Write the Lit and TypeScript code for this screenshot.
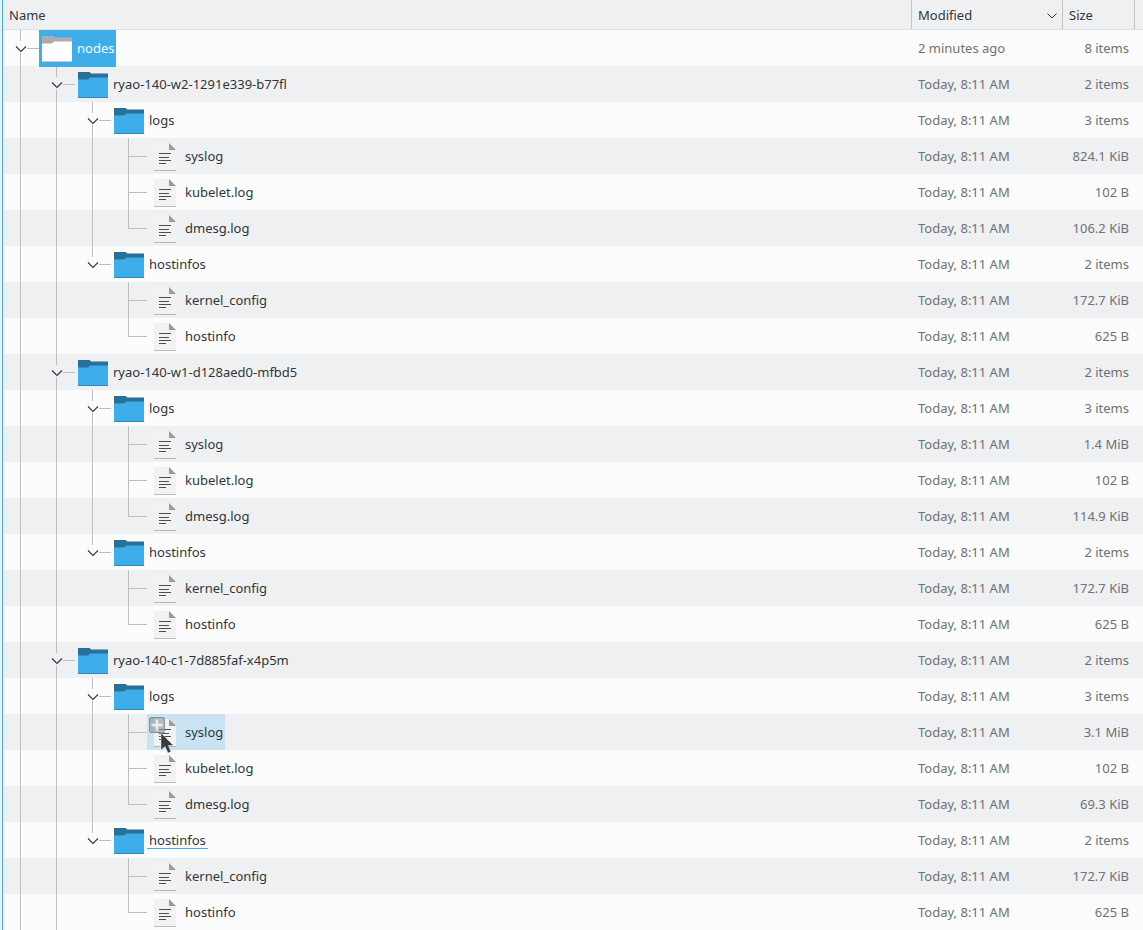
import { LitElement, html, css, svg } from "lit";
import { customElement } from "lit/decorators.js";

type Kind = "dir" | "file";
interface Row {
  depth: number;
  name: string;
  kind: Kind;
  modified: string;
  size: string;
  last?: boolean;
  state?: "selected" | "hover" | "current";
}

const T = "Today, 8:11 AM";
const node = (name: string, sys: string, dm: string): Row[] => [
  { depth: 1, name, kind: "dir", modified: T, size: "2 items" },
  { depth: 2, name: "logs", kind: "dir", modified: T, size: "3 items" },
  { depth: 3, name: "syslog", kind: "file", modified: T, size: sys },
  { depth: 3, name: "kubelet.log", kind: "file", modified: T, size: "102 B" },
  { depth: 3, name: "dmesg.log", kind: "file", modified: T, size: dm, last: true },
  { depth: 2, name: "hostinfos", kind: "dir", modified: T, size: "2 items", last: true },
  { depth: 3, name: "kernel_config", kind: "file", modified: T, size: "172.7 KiB" },
  { depth: 3, name: "hostinfo", kind: "file", modified: T, size: "625 B", last: true },
];

const rows: Row[] = [
  { depth: 0, name: "nodes", kind: "dir", modified: "2 minutes ago", size: "8 items", state: "selected" },
  ...node("ryao-140-w2-1291e339-b77fl", "824.1 KiB", "106.2 KiB"),
  ...node("ryao-140-w1-d128aed0-mfbd5", "1.4 MiB", "114.9 KiB"),
  ...node("ryao-140-c1-7d885faf-x4p5m", "3.1 MiB", "69.3 KiB"),
];
rows[19].state = "hover";
rows[22].state = "current";

const folderIcon = (white: boolean) => svg`
  <svg class="icon" width="32" height="32" viewBox="0 0 32 32">
    <path d="M2 4h11.5l2 1.5H32v7H2z" fill=${white ? "#acacac" : "#2a7199"}/>
    <path d="M2 11.5h10l2-2H32V30H2z" fill=${white ? "#ffffff" : "#3daee9"}/>
    <rect x="2" y="29" width="30" height="1" fill=${white ? "#c8c8c8" : "#2b8cc2"}/>
  </svg>`;

const fileIcon = () => svg`
  <svg class="icon" width="32" height="32" viewBox="0 0 32 32">
    <path d="M6 3h15l7 7v20H6z" fill="#f2f2f2"/>
    <path d="M21 3l7 7h-7z" fill="#9a9a9a"/>
    <rect x="6" y="30" width="22" height="1" fill="#b8b8b8"/>
    <rect x="11" y="13" width="12" height="1" fill="#4d4d4d"/>
    <rect x="11" y="17" width="10" height="1" fill="#4d4d4d"/>
    <rect x="11" y="20" width="12" height="1" fill="#4d4d4d"/>
    <rect x="11" y="23" width="7" height="1" fill="#4d4d4d"/>
  </svg>`;

@customElement("app-root")
export class AppRoot extends LitElement {
  static styles = css`
    :host {
      display: block;
      width: 1143px;
      height: 930px;
      overflow: hidden;
      background: #eff0f1;
      font-family: "Noto Sans", sans-serif;
      font-size: 13px;
      color: #31363b;
      position: relative;
    }
    .head {
      display: grid;
      grid-template-columns: 909px 151px 1fr;
      height: 30px;
      margin-left: 3px;
      background: #eff0f1;
      border-bottom: 1px solid #dfe0e1;
      box-sizing: border-box;
    }
    .hcell {
      display: flex;
      align-items: center;
      justify-content: space-between;
      padding: 1px 6px 0;
      border-right: 1px solid #c4c6c8;
      box-sizing: border-box;
      height: 29px;
    }
    .hcell.last {
      width: 72px;
    }
    .sort {
      display: block;
      margin: 2px -1px 0 0;
    }
    .edge {
      position: absolute;
      left: 2px;
      top: 0;
      width: 1px;
      height: 930px;
      background: #3daee9;
    }
    .row {
      display: grid;
      grid-template-columns: 909px 151px 1fr;
      grid-template-rows: 36px;
      height: 36px;
      margin-left: 3px;
      align-items: stretch;
      background: #fcfcfc;
    }
    .row.alt {
      background: #eff0f1;
    }
    .name {
      display: flex;
      align-items: flex-start;
      min-width: 0;
    }
    .guide {
      width: 36px;
      height: 36px;
      flex: none;
      position: relative;
    }
    .guide.on::before {
      content: "";
      position: absolute;
      left: 17px;
      top: 0;
      bottom: 0;
      width: 1px;
      background: #bdbebf;
    }
    .guide.elbow::before {
      content: "";
      position: absolute;
      left: 17px;
      top: 0;
      height: 18px;
      width: 1px;
      background: #bdbebf;
    }
    .guide.branch::after {
      content: "";
      position: absolute;
      left: 17px;
      top: 18px;
      width: 19px;
      height: 1px;
      background: #bdbebf;
    }
    .chev {
      position: absolute;
      left: 12px;
      top: 11px;
      z-index: 1;
      background: #fcfcfc;
    }
    .row.alt .chev {
      background: #eff0f1;
    }
    .item {
      display: flex;
      align-items: center;
      height: 36px;
      gap: 5px;
      padding: 0 2px 0 1px;
      position: relative;
    }
    .item.selected {
      background: #3daee9;
      color: #fcfcfc;
      height: 37px;
      z-index: 2;
    }
    .item.selected .icon {
      margin-bottom: 1px;
    }
    .item.selected .label {
      margin-bottom: 1px;
    }
    .item.hover {
      background: #c9e3f2;
    }
    .item.current::after {
      content: "";
      position: absolute;
      left: 36px;
      right: 0;
      top: 26px;
      height: 1px;
      background: #3daee9;
    }
    .icon {
      display: block;
      flex: none;
    }
    .mod,
    .size {
      display: flex;
      align-items: center;
      color: #6e7276;
      box-sizing: border-box;
    }
    .mod {
      padding-left: 6px;
    }
    .size {
      justify-content: flex-end;
      padding-right: 14px;
    }
    .plus {
      position: absolute;
      left: 2px;
      top: 3px;
    }
    .cursor {
      position: absolute;
      left: 13px;
      top: 18px;
    }
  `;

  private guides(r: Row, i: number) {
    const out = [];
    for (let d = 0; d <= r.depth; d++) {
      if (d === r.depth) {
        const cls = r.depth > 0 && r.last ? "elbow branch" : "on branch";
        out.push(html`<div class="guide ${cls}">
          ${r.kind === "dir"
            ? html`<svg class="chev" width="12" height="12" viewBox="0 0 12 12">
                <path d="M1 5.5l5 5 5-5" fill="none" stroke="#31363b" stroke-width="1.1"/>
              </svg>`
            : ""}
        </div>`);
      } else {
        const on = d !== 2 || (i - 1) % 8 < 5;
        out.push(html`<div class="guide ${on ? "on" : ""}"></div>`);
      }
    }
    return out;
  }

  private item(r: Row) {
    const icon = r.kind === "dir" ? folderIcon(r.state === "selected") : fileIcon();
    return html`<div class="item ${r.state ?? ""}">
      ${icon}
      ${r.state === "hover"
        ? html`<svg class="plus" width="16" height="16" viewBox="0 0 16 16">
              <rect x="0.5" y="0.5" width="15" height="15" rx="1.5" fill="#8a96a0" fill-opacity=".62" stroke="#7f878d" stroke-opacity=".85"/>
              <path d="M8 2.5v11M2.5 8h11" stroke="#f4f6f7" stroke-opacity=".85" stroke-width="2.4"/>
            </svg>
            <svg class="cursor" width="15" height="22" viewBox="0 0 15 22">
              <path d="M1 1v17l4-3.6 3 6.6 3-1.2-2.7-6.3H13.5z" fill="#3a3a3a" stroke="#eee" stroke-width=".5"/>
            </svg>`
        : ""}
      <span class="label">${r.name}</span>
    </div>`;
  }

  render() {
    return html`
      <div class="head">
        <div class="hcell">Name</div>
        <div class="hcell">
          Modified
          <svg class="sort" width="10" height="6" viewBox="0 0 10 6"><path d="M0.5 0.5l4.5 4.5 4.5-4.5" fill="none" stroke="#31363b"/></svg>
        </div>
        <div class="hcell last">Size</div>
      </div>
      ${rows.map(
        (r, i) => html`<div class="row ${i % 2 ? "alt" : ""}">
          <div class="name">${this.guides(r, i)}${this.item(r)}</div>
          <div class="mod">${r.modified}</div>
          <div class="size">${r.size}</div>
        </div>`
      )}
      <div class="edge"></div>
    `;
  }
}
